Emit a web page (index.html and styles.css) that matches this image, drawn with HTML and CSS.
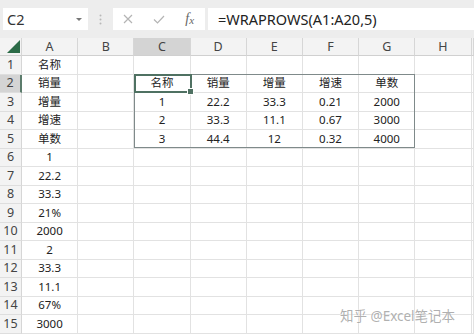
FILE: index.html
```html
<!DOCTYPE html>
<html lang="zh-CN">
<head>
    <meta charset="UTF-8">
    <title>WRAPROWS</title>
    <link rel="stylesheet" href="styles.css">
</head>
<body>
    <!-- 编辑栏 -->
    <div class="toolbar">
        <div class="namebox">
            <span>C2</span>
            <i class="caret"></i>
        </div>
        <div class="grip">
            <svg width="3" height="11" viewBox="0 0 3 11">
                <circle cx="1.5" cy="1.5" r="1" fill="#b8b8b8"/>
                <circle cx="1.5" cy="5.5" r="1" fill="#b8b8b8"/>
                <circle cx="1.5" cy="9.5" r="1" fill="#b8b8b8"/>
            </svg>
        </div>
        <div class="fxbox">
            <span class="slot">
                <svg width="10" height="10" viewBox="0 0 10 10">
                    <path d="M1 1 L9 9 M9 1 L1 9" stroke="#b4b4b4" stroke-width="1.2" fill="none"/>
                </svg>
            </span>
            <span class="slot">
                <svg width="12" height="9" viewBox="0 0 12 9">
                    <path d="M1 4.5 L4.5 8 L11 1" stroke="#b4b4b4" stroke-width="1.2" fill="none"/>
                </svg>
            </span>
            <span class="slot fx">f<small>x</small></span>
        </div>
        <div class="formula">=WRAPROWS(A1:A20,5)</div>
    </div>

    <!-- 工作表 -->
    <div class="sheet">
        <table class="grid">
            <colgroup>
                <col class="col-rh">
                <col class="col-c"><col class="col-c"><col class="col-c"><col class="col-c">
                <col class="col-c"><col class="col-c"><col class="col-c"><col class="col-c">
                <col class="col-end">
            </colgroup>
            <tr class="head">
                <th class="corner">
                    <svg width="13" height="13" viewBox="0 0 13 13"><polygon points="13,0 13,13 0,13" fill="#2b6b47"/></svg>
                </th>
                <th>A</th><th>B</th><th class="cur-col">C</th><th>D</th><th>E</th><th>F</th><th>G</th><th>H</th><th></th>
            </tr>
            <tr><th>1</th><td>名称</td><td></td><td></td><td></td><td></td><td></td><td></td><td></td><td></td></tr>
            <tr><th class="cur-row">2</th><td>销量</td><td></td><td>名称</td><td>销量</td><td>增量</td><td>增速</td><td>单数</td><td></td><td></td></tr>
            <tr><th>3</th><td>增量</td><td></td><td>1</td><td>22.2</td><td>33.3</td><td>0.21</td><td>2000</td><td></td><td></td></tr>
            <tr><th>4</th><td>增速</td><td></td><td>2</td><td>33.3</td><td>11.1</td><td>0.67</td><td>3000</td><td></td><td></td></tr>
            <tr><th>5</th><td>单数</td><td></td><td>3</td><td>44.4</td><td>12</td><td>0.32</td><td>4000</td><td></td><td></td></tr>
            <tr><th>6</th><td>1</td><td></td><td></td><td></td><td></td><td></td><td></td><td></td><td></td></tr>
            <tr><th>7</th><td>22.2</td><td></td><td></td><td></td><td></td><td></td><td></td><td></td><td></td></tr>
            <tr><th>8</th><td>33.3</td><td></td><td></td><td></td><td></td><td></td><td></td><td></td><td></td></tr>
            <tr><th>9</th><td>21%</td><td></td><td></td><td></td><td></td><td></td><td></td><td></td><td></td></tr>
            <tr><th>10</th><td>2000</td><td></td><td></td><td></td><td></td><td></td><td></td><td></td><td></td></tr>
            <tr><th>11</th><td>2</td><td></td><td></td><td></td><td></td><td></td><td></td><td></td><td></td></tr>
            <tr><th>12</th><td>33.3</td><td></td><td></td><td></td><td></td><td></td><td></td><td></td><td></td></tr>
            <tr><th>13</th><td>11.1</td><td></td><td></td><td></td><td></td><td></td><td></td><td></td><td></td></tr>
            <tr><th>14</th><td>67%</td><td></td><td></td><td></td><td></td><td></td><td></td><td></td><td></td></tr>
            <tr><th>15</th><td>3000</td><td></td><td></td><td></td><td></td><td></td><td></td><td></td><td></td></tr>
        </table>
        <!-- 溢出区域和活动单元格 -->
        <div class="spill"></div>
        <div class="active"><i class="handle"></i></div>
    </div>

    <div class="watermark">知乎 @Excel笔记本</div>
</body>
</html>
```

FILE: styles.css
```css
body {
    margin: 0;
    width: 474px;
    height: 335px;
    overflow: hidden;
    position: relative;
    background-color: #fff;
    font-family: "Noto Sans", "Noto Sans CJK SC", sans-serif;
    color: #222;
}

/* 编辑栏 */
.toolbar {
    height: 38px;
    background-color: #ededed;
    display: flex;
    align-items: center;
    padding-left: 3px;
    box-sizing: border-box;
}

.namebox {
    width: 85px;
    height: 22px;
    background-color: #fff;
    display: flex;
    align-items: center;
    justify-content: space-between;
    padding: 0 6px 0 4px;
    box-sizing: border-box;
    font-size: 14.5px;
    color: #333;
}

.caret {
    width: 0;
    height: 0;
    border-left: 3px solid transparent;
    border-right: 3px solid transparent;
    border-top: 3px solid #777;
}

.grip {
    width: 25px;
    display: flex;
    justify-content: center;
}

.fxbox {
    width: 92px;
    height: 22px;
    background-color: #fff;
    display: flex;
    align-items: center;
}

.slot {
    width: 31px;
    display: flex;
    justify-content: center;
    align-items: center;
}

.fx {
    font-family: "Liberation Serif", serif;
    font-style: italic;
    font-size: 14px;
    color: #666;
}

.fx small {
    font-size: 11px;
    position: relative;
    top: 1px;
}

.formula {
    flex: 1;
    height: 22px;
    margin-left: 3px;
    background-color: #fff;
    padding-left: 10px;
    font-size: 14.5px;
    line-height: 22px;
    color: #222;
}

/* 工作表 */
.sheet {
    position: relative;
}

.grid {
    table-layout: fixed;
    border-collapse: separate;
    border-spacing: 0;
    width: 474px;
}

.col-rh {
    width: 22px;
}

.col-c {
    width: 56.2px;
}

.col-end {
    width: 2.4px;
}

.grid tr {
    height: 18.5px;
}

.grid tr.head {
    height: 18px;
}

.grid td {
    padding: 0;
    border-right: 1px solid #e2e2e2;
    border-bottom: 1px solid #e2e2e2;
    text-align: center;
    font-size: 11.5px;
    line-height: 14px;
    color: #222;
    white-space: nowrap;
}

.grid th {
    padding: 0;
    background-color: #f3f3f3;
    border-right: 1px solid #d6d6d6;
    border-bottom: 1px solid #dedede;
    font-weight: normal;
    font-size: 12.5px;
    line-height: 14px;
    color: #444;
    text-align: center;
}

.grid tr.head th {
    border-bottom: 1px solid #d0d0d0;
}

.corner {
    text-align: right;
    vertical-align: bottom;
}

.corner svg {
    display: block;
    margin: 0 1px 2px auto;
}

.grid th.cur-col {
    background-color: #d4d4d4;
    border-bottom: 2px solid #5c7c6c;
}

.grid th.cur-row {
    background-color: #d4d4d4;
    border-right: 2px solid #5c7c6c;
}

.spill {
    position: absolute;
    left: 134px;
    top: 36px;
    width: 281px;
    height: 74px;
    border: 1px solid #7f8a8a;
    box-sizing: border-box;
}

.active {
    position: absolute;
    left: 133.5px;
    top: 35.5px;
    width: 58px;
    height: 19.5px;
    border: 2px solid #4f7162;
    box-sizing: border-box;
}

.handle {
    position: absolute;
    right: -4px;
    bottom: -4px;
    width: 5px;
    height: 5px;
    background-color: #4f7162;
    border: 1px solid #fff;
}

.watermark {
    position: absolute;
    left: 340px;
    top: 305px;
    font-size: 13.5px;
    color: rgba(150, 150, 150, 0.75);
    text-shadow: 0 0 2px #fff;
    white-space: nowrap;
}
```
